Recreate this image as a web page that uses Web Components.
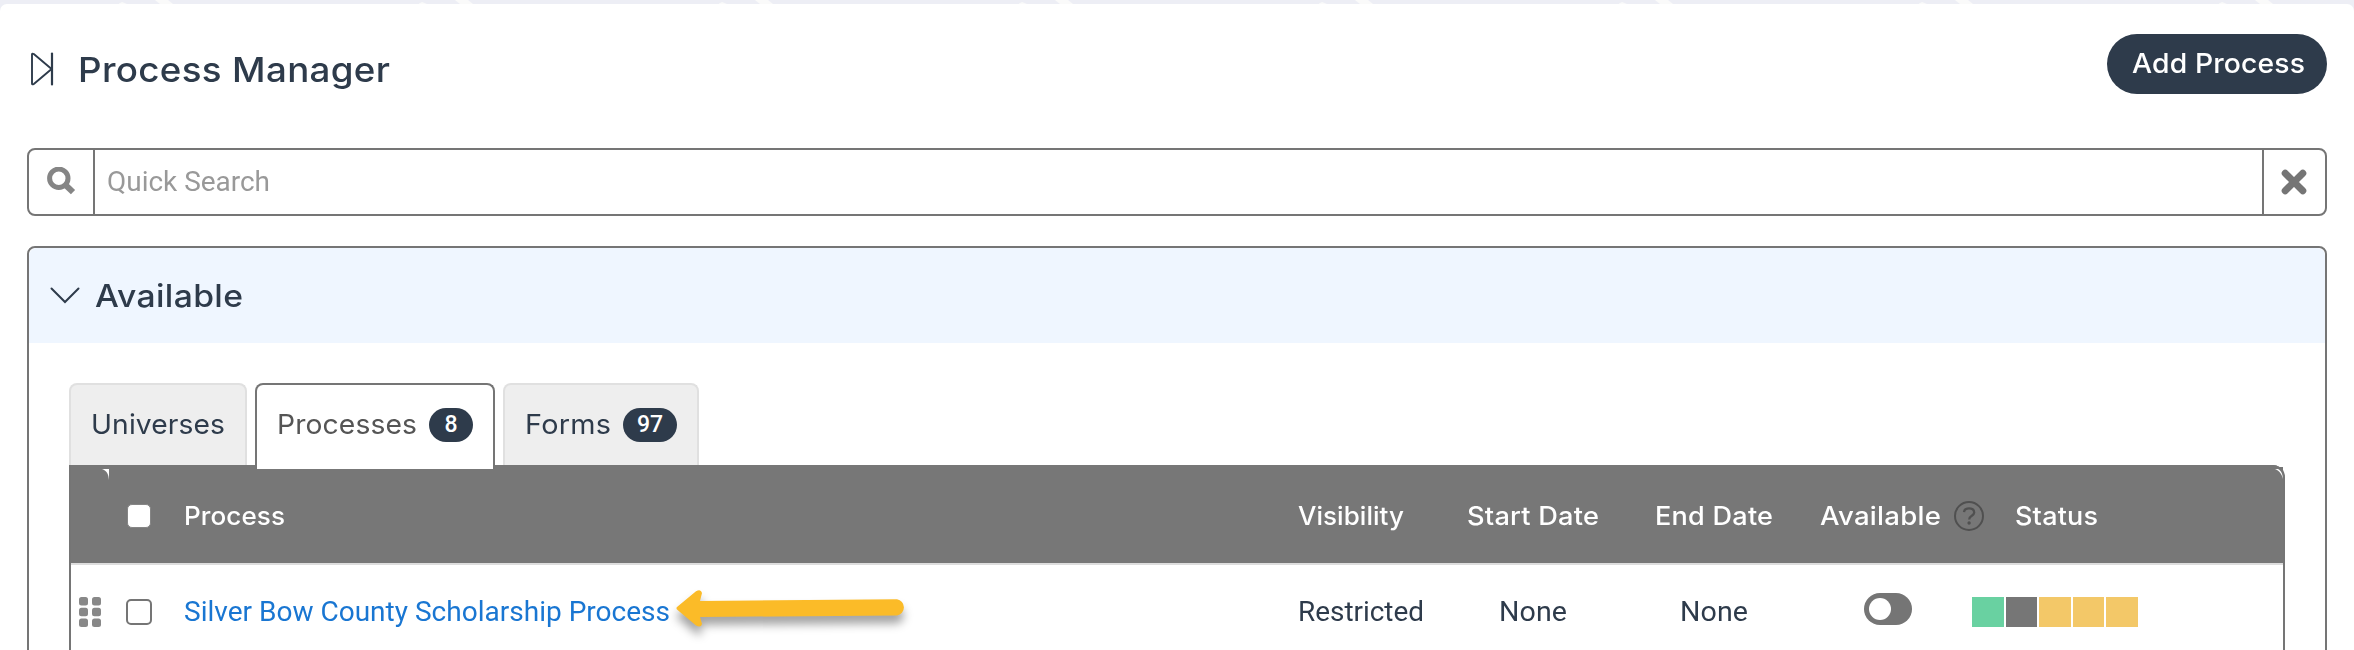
<!DOCTYPE html>
<html lang="en">
<head>
<meta charset="utf-8">
<title>Process Manager</title>
<style>
html,body{margin:0;height:650px;overflow:hidden;background:#fff}
body{font-family:Roboto,sans-serif;color:#2e3b4b}
</style>
</head>
<body>
<process-page></process-page>
<script>
const define=(name,html,ready)=>{
  const t=document.createElement('template');
  t.innerHTML='<style>*{box-sizing:border-box}svg{display:block;flex:none}</style>'+html;
  customElements.define(name,class extends HTMLElement{
    constructor(){super();this.attachShadow({mode:'open'}).append(t.content.cloneNode(true));}
    connectedCallback(){if(ready)ready(this);}
  });
};

/* Single-line label; glyph width and tracking are adjusted to fill the requested width. */
define('fit-text','<style>:host{display:block;flex:none;white-space:pre;line-height:40px;font-family:Inter,sans-serif}span{display:inline-block;transform-origin:0 50%}</style><span><slot></slot></span>',el=>{
  const s=el.shadowRoot.querySelector('span'),w=+el.getAttribute('w');
  el.style.fontSize=el.getAttribute('size')+'px';
  const n=el.textContent.length,nat=s.getBoundingClientRect().width;
  const stretch=1+(w/nat-1)*.8;
  s.style.letterSpacing=((w/stretch-nat)/(n-1||1))+'px';
  s.style.transform='scaleX('+stretch+')';
  el.style.width=w+'px';
});

define('count-badge','<style>:host{display:flex;flex:none;align-items:center;justify-content:center;height:34px;border-radius:17px;background:#2e3b4b;color:#fff;font:500 23px/34px Roboto,sans-serif;position:relative;top:1px}span{margin-top:-1px}</style><span><slot></slot></span>',el=>{el.style.width=el.getAttribute('w')+'px'});

define('tab-item',`<style>
:host{display:flex;flex:none;align-items:center;height:82px;padding-left:20px;padding-bottom:2px;border:2px solid #e0e0e0;border-bottom:0;border-radius:8px 8px 0 0;background:#eee}
:host([active]){height:86px;background:#fff;border-color:#757575;color:#555;z-index:1;padding-bottom:6px}
</style><slot></slot>`,el=>{el.style.width=el.getAttribute('w')+'px'});

define('check-box',`<style>
:host{display:block;flex:none;width:26px;height:26px;border:2px solid #757575;border-radius:5px;background:#fff}
</style>`);

define('toggle-switch',`<style>
:host{display:block;width:48px;height:32px;border-radius:16px;background:#757575;padding:5px}
i{display:block;width:22px;height:22px;border-radius:50%;background:#fff}
</style><i></i>`);

define('status-blocks',`<style>
:host{display:grid;grid-template-columns:32px 31px 32px 31px 32px;column-gap:2px;height:30px}
i{background:#f3c868}i:nth-of-type(1){background:#69d1a1}i:nth-of-type(2){background:#767676}
</style><i></i><i></i><i></i><i></i><i></i>`);

define('search-bar',`<style>
:host{display:grid;grid-template-columns:66px 1fr 63px;height:68px;border:2px solid #757575;border-radius:8px;overflow:hidden}
div{display:flex;align-items:center}
.icon{border-right:2px solid #757575;padding-left:18px}
.field{padding-left:12px;color:#999}
.field fit-text{font-family:Roboto,sans-serif}
.clear{border-left:2px solid #757575;padding-left:16px}
</style>
<div class="icon"><svg width="30" height="30" viewBox="0 0 30 30" fill="none" stroke="#858585"><circle cx="11.8" cy="11.3" r="9.2" stroke-width="5"/><path d="M18.5 18L26 25.2" stroke-width="6"/></svg></div>
<div class="field"><fit-text w="163" size="28">Quick Search</fit-text></div>
<div class="clear"><svg width="28" height="28" viewBox="0 0 28 28" stroke="#757575" stroke-width="7" stroke-linecap="round"><path d="M5.2 5.2L22.8 22.8M22.8 5.2L5.2 22.8"/></svg></div>`);

define('page-header',`<style>
:host{display:flex;height:144px;justify-content:space-between}
.title{display:flex;padding:46px 0 0 3px;height:86px}
svg{margin-top:1px}
.title fit-text{margin:-4px 0 0 22px;font-weight:450;line-height:48px}
button{display:flex;width:220px;height:60px;margin-top:30px;border:0;border-radius:30px;background:#2e3b4b;color:#fff;padding:9px 0 0 22px}
button fit-text{font-weight:450}
</style>
<div class="title"><svg width="26" height="36" viewBox="0 0 26 36" fill="none" stroke="#2e3b4b" stroke-width="1.9"><path d="M2 3.3V32.5Q2 34 3.8 33L20.7 18.8Q21.6 18 20.7 17.2L3.8 3Q2 2.2 2 3.3Z" stroke-linejoin="round"/><path d="M22 2.5V33.5" stroke-width="2.2" stroke-linecap="round"/></svg>
<fit-text w="312" size="34.5">Process Manager</fit-text></div>
<button><fit-text w="173" size="27.5">Add Process</fit-text></button>`);

define('callout-arrow',`<style>:host{display:block;margin-left:1px}svg{overflow:visible;filter:drop-shadow(0 8px 5px rgba(0,0,0,.36))}</style>
<svg width="234" height="40" viewBox="0 0 234 40" fill="#fbbb28"><path d="M1 18L20 2.2Q25 -.5 26 4L24 12L221 10.2A8.2 8.2 0 0 1 221 26.4L24 28L26 35Q25 39.2 20 36.5L1 20.5Q0 19.2 1 18Z"/></svg>`);

define('process-table',`<style>
:host{display:block;border:2px solid #757575;border-top:0;border-radius:0 12px 0 0;height:240px;background:linear-gradient(#777 100px,#fff 100px)}
.row{display:grid;grid-template-columns:38px 60px 1113px 158px 185px 178px 198px 110px 1fr;align-items:center}
.head{height:98px;padding-top:4px;color:#fff;font-weight:500;background:#777;border-radius:0 10px 0 0;position:relative}
.item{height:96px;border-top:2px solid #ddd;background:#fff}
.name{padding-left:15px;display:flex;align-items:center}
.vis{padding-left:16px}
.mid{display:flex;align-items:center;justify-content:center}
.item fit-text{font-family:Roboto,sans-serif}
.link{color:#1976d2}
.head check-box{width:24px;height:24px;border:1px solid #858585}
.help{margin-left:13px}
.drag{margin-left:8px}
toggle-switch{position:relative;left:-14px;top:-3px}
status-blocks{position:relative;left:-1px}
.notch{position:absolute;top:4px;left:31px}
.edge{position:absolute;top:2px;right:-2px}
</style>
<div class="row head">
<span></span><span class="mid"><check-box></check-box></span>
<div class="name"><fit-text w="101" size="25.5">Process</fit-text></div>
<div class="vis"><fit-text w="106" size="25.5">Visibility</fit-text></div>
<div class="mid"><fit-text w="132" size="25.5">Start Date</fit-text></div>
<div class="mid"><fit-text w="118" size="25.5">End Date</fit-text></div>
<div class="mid"><fit-text w="121" size="25.5">Available</fit-text><svg class="help" width="30" height="30" viewBox="0 0 30 30" fill="none" stroke="#505050" stroke-width="2"><circle cx="15" cy="15" r="14"/><path d="M10 11.2C10.2 8.6 12.3 7.4 15 7.4C18 7.4 20.2 9 20.2 11.6C20.2 15 15.2 14.6 15.2 18.5" stroke-width="2.3"/><circle cx="15.1" cy="22" r="1.7" fill="#505050" stroke="none"/></svg></div>
<div class="mid"><fit-text w="83" size="25.5">Status</fit-text></div>
<svg class="notch" width="8" height="12" viewBox="0 0 8 12"><path d="M0 0H7V11C6.5 5 5 2 0 0Z" fill="#fff"/></svg>
<svg class="edge" width="12" height="14" viewBox="0 0 12 14"><path d="M2 2H5C8.5 4 9.8 7 9.8 12C8.8 7 6.8 4 2 2Z" fill="#fff"/><path d="M6 0H10V6Z" fill="#757575"/></svg>
</div>
<div class="row item">
<svg class="drag" width="22" height="30" viewBox="0 0 22 30" fill="#888"><rect width="9" height="8.5" rx="2.5"/><rect x="13" width="9" height="8.5" rx="2.5"/><rect y="10.8" width="9" height="8.5" rx="2.5"/><rect x="13" y="10.8" width="9" height="8.5" rx="2.5"/><rect y="21.5" width="9" height="8.5" rx="2.5"/><rect x="13" y="21.5" width="9" height="8.5" rx="2.5"/></svg>
<span class="mid"><check-box></check-box></span>
<div class="name"><fit-text class="link" w="486" size="28">Silver Bow County Scholarship Process</fit-text><callout-arrow style="margin-left:6px;margin-top:-6px"></callout-arrow></div>
<div class="vis"><fit-text w="126" size="28">Restricted</fit-text></div>
<div class="mid"><fit-text w="68" size="28">None</fit-text></div>
<div class="mid"><fit-text w="68" size="28">None</fit-text></div>
<div class="mid"><toggle-switch></toggle-switch></div>
<div class="mid"><status-blocks></status-blocks></div>
</div>`);

define('collapse-panel',`<style>
:host{display:block;margin-top:30px;height:440px;border:2px solid #757575;border-radius:8px}
header{display:flex;align-items:center;height:95px;padding-left:21px;background:#eff6ff;border-radius:8px 8px 0 0}
header fit-text{margin-left:15px;font-weight:450}
.body{padding:40px 40px 0}
</style>
<header><svg width="30" height="20" viewBox="0 0 30 20" fill="none" stroke="#2e3b4b" stroke-width="2"><path d="M1.5 2.5L15 16L28.5 2.5" stroke-linecap="round"/></svg><fit-text w="148" size="31">Available</fit-text></header>
<div class="body"><slot></slot></div>`);

define('process-page',`<style>
:host{display:block;height:650px;background:#edeef5;overflow:hidden}
.strip{height:4px;background:#edeef5;display:flex}
main{height:646px;background:#fff;border-radius:7px 7px 0 0;padding:0 27px}
.tabs{display:flex;gap:8px;height:82px}
.tabs count-badge{margin-left:12px}
</style>
<div class="strip"><svg width="2354" height="4"><defs><pattern id="tile" width="300" height="4" patternUnits="userSpaceOnUse"><path d="M119 3.5L122 2L127 4H119ZM155 0H168L173 4H160Z" fill="#fafafa"/></pattern></defs><rect width="2354" height="4" fill="url(#tile)"/></svg></div>
<main><page-header></page-header><search-bar></search-bar>
<collapse-panel>
<div class="tabs">
<tab-item w="178"><fit-text w="134" size="27.5">Universes</fit-text></tab-item>
<tab-item w="240" active><fit-text w="140" size="27.5">Processes</fit-text><count-badge w="44">8</count-badge></tab-item>
<tab-item w="196"><fit-text w="86" size="27.5">Forms</fit-text><count-badge w="54">97</count-badge></tab-item>
</div>
<process-table></process-table>
</collapse-panel></main>`);
</script>
</body>
</html>
